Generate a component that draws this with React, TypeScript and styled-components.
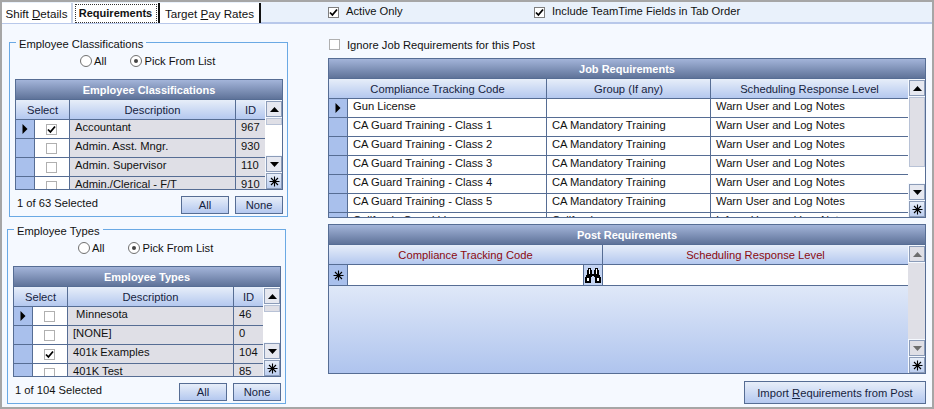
import React from "react";
import styled, { createGlobalStyle } from "styled-components";

const Global = createGlobalStyle`
  html, body { margin: 0; padding: 0; background: #a6a6a6; }
  * { box-sizing: border-box; }
  body { font-family: "Liberation Sans", Arial, sans-serif; font-size: 11.2px; color: #111; }
`;

const Line = "#566d94";

const Window = styled.div`
  width: 934px;
  height: 409px;
  border: 2px solid #a6a6a6;
  background: #f5f9ff;
  display: flex;
  flex-direction: column;
  overflow: hidden;
`;

const TopBar = styled.div`
  height: 22px;
  flex: none;
  display: flex;
  background: #e9f1fb;
  border-bottom: 2px solid #b8c8ea;
`;

const TabStrip = styled.div`
  width: 326px;
  flex: none;
  display: flex;
  align-items: flex-start;
  padding-top: 1px;
`;

const Tab = styled.div<{ $w: number; $active?: boolean; $edge?: "dark" | "light" }>`
  width: ${(p) => p.$w}px;
  height: 20px;
  flex: none;
  background: #fff;
  display: flex;
  align-items: center;
  justify-content: center;
  white-space: nowrap;
  font-size: ${(p) => (p.$active ? "11px" : "11.6px")};
  font-weight: ${(p) => (p.$active ? 700 : 400)};
  border-right: 2px solid ${(p) => (p.$edge === "dark" ? "#111" : "#c8d2e6")};
`;

const Focus = styled.span`
  border: 1px dotted #333;
  padding: 1px 2px;
  height: 19px;
  width: 82px;
  display: flex;
  align-items: center;
  justify-content: center;
`;

const TopChecks = styled.div`
  display: flex;
  align-items: center;
`;

const CheckLabel = styled.label<{ $w?: number; $gap?: number }>`
  display: flex;
  align-items: center;
  gap: ${(p) => p.$gap ?? 7}px;
  width: ${(p) => (p.$w ? `${p.$w}px` : "auto")};
  white-space: nowrap;
`;

const LabelText = styled.span<{ $up?: boolean; $down?: boolean }>`
  padding-bottom: ${(p) => (p.$up ? 2 : 0)}px;
  padding-top: ${(p) => (p.$down ? 2 : 0)}px;
`;

const Box = styled.span<{ $dark?: boolean }>`
  width: 11px;
  height: 11px;
  flex: none;
  background: #fff;
  border: 1px solid ${(p) => (p.$dark ? "#7f7f7f" : "#b0b0b0")};
  display: flex;
  align-items: center;
  justify-content: center;
`;

const Main = styled.div`
  flex: 1;
  min-height: 0;
  display: flex;
`;

const LeftColumn = styled.div`
  width: 326px;
  flex: none;
  display: flex;
  flex-direction: column;
`;

const Group = styled.section<{ $x: number; $top: number }>`
  position: relative;
  width: 279px;
  height: 175px;
  margin-left: ${(p) => p.$x}px;
  margin-top: ${(p) => p.$top}px;
  border: 1px solid #6aa9e4;
  padding: 12px 3px 0 5px;
  display: flex;
  flex-direction: column;
`;

const Legend = styled.div`
  position: absolute;
  left: 6px;
  top: -6px;
  padding: 0 3px;
  background: #f5f9ff;
  line-height: 14px;
`;

const RadioRow = styled.div`
  height: 12px;
  display: flex;
  align-items: center;
  padding-left: 65px;
  gap: 24px;
  margin-bottom: 12px;
`;

const RadioLabel = styled.label`
  display: flex;
  align-items: center;
  gap: 2px;
  white-space: nowrap;
`;

const RadioDot = styled.span<{ $on?: boolean }>`
  width: 12px;
  height: 12px;
  border-radius: 50%;
  border: 1px solid #707070;
  background: #fff;
  display: flex;
  align-items: center;
  justify-content: center;
  &::after {
    content: "";
    width: 4px;
    height: 4px;
    border-radius: 50%;
    background: ${(p) => (p.$on ? "#444" : "transparent")};
  }
`;

const Frame = styled.div<{ $w: number; $h: number }>`
  width: ${(p) => p.$w}px;
  height: ${(p) => p.$h}px;
  flex: none;
  border: 1px solid ${Line};
  display: flex;
  flex-direction: column;
  background: #f5f9ff;
`;

const TitleBar = styled.div`
  height: 20px;
  flex: none;
  border-bottom: 1px solid ${Line};
  background: linear-gradient(#a3b4d9, #5f7399);
  color: #fff;
  font-weight: 700;
  font-size: 11px;
  display: flex;
  align-items: center;
  justify-content: center;
`;

const GridBody = styled.div`
  flex: 1;
  min-height: 0;
  display: flex;
`;

const TableArea = styled.div`
  flex: 1;
  min-width: 0;
  overflow: hidden;
  display: flex;
  flex-direction: column;
`;

const HeaderRow = styled.div<{ $cols: string }>`
  height: 20px;
  flex: none;
  display: grid;
  grid-template-columns: ${(p) => p.$cols};
  border-bottom: 1px solid ${Line};
  background: linear-gradient(#e7eef9, #b4c8ef);
`;

const HeaderCell = styled.div<{ $red?: boolean }>`
  display: flex;
  align-items: center;
  justify-content: center;
  border-right: 1px solid ${Line};
  color: ${(p) => (p.$red ? "#8b0a10" : "#16233f")};
  white-space: nowrap;
  &:last-child { border-right: 0; }
`;

const DataRow = styled.div<{ $cols: string; $h?: number }>`
  height: ${(p) => p.$h ?? 19}px;
  flex: none;
  display: grid;
  grid-template-columns: ${(p) => p.$cols};
  border-bottom: 1px solid ${Line};
`;

const RowHead = styled.div`
  background: #a9c0ec;
  border-right: 1px solid ${Line};
  display: flex;
  align-items: center;
  justify-content: center;
`;

const Cell = styled.div<{ $gray?: boolean }>`
  background: ${(p) => (p.$gray ? "#dfdfe6" : "#fff")};
  border-right: 1px solid ${Line};
  padding: 0 0 5px 5px;
  display: flex;
  align-items: center;
  white-space: pre;
  overflow: hidden;
  &:last-child { border-right: 0; }
`;

const CheckCell = styled.div`
  background: #fff;
  border-right: 1px solid ${Line};
  padding-right: 1px;
  display: flex;
  align-items: center;
  justify-content: center;
`;

const InputCell = styled.div`
  background: #fff;
  border-right: 1px solid ${Line};
  display: flex;
  justify-content: flex-end;
`;

const FindButton = styled.div`
  width: 19px;
  background: #c4d4f2;
  border-left: 1px solid ${Line};
  display: flex;
  align-items: center;
  justify-content: center;
`;

const Fill = styled.div`
  flex: 1;
  background: linear-gradient(#dfe8f8, #afc4ee);
`;

const Scroll = styled.div`
  width: 17px;
  flex: none;
  display: flex;
  flex-direction: column;
  padding: 1px 0 0 1px;
  gap: 1px;
`;

const ScrollBtn = styled.div<{ $h?: number; $star?: boolean; $off?: boolean }>`
  height: ${(p) => p.$h ?? 16}px;
  flex: none;
  border: 1px solid #8c9cb8;
  background: ${(p) => (p.$star ? "linear-gradient(#e7eef9, #bccef0)" : p.$off ? "#dfdfe6" : "#e6e8f0")};
  display: flex;
  align-items: center;
  justify-content: center;
`;

const Track = styled.div<{ $off?: boolean }>`
  flex: 1;
  min-height: 0;
  margin-left: -1px;
  background: ${(p) => (p.$off ? "#dfdfe6" : "#fff")};
`;

const Thumb = styled.div<{ $h: number }>`
  height: ${(p) => p.$h}px;
  margin-left: 1px;
  background: #dfdfe6;
  border: 1px solid #b8c2d6;
`;

const StatusRow = styled.div`
  height: 18px;
  margin-top: 6px;
  width: 268px;
  display: flex;
  align-items: center;
  padding-left: 2px;
`;

const StatusText = styled.span`
  flex: 1;
  margin-top: -5px;
`;

const SmallBtn = styled.button`
  width: 48px;
  height: 18px;
  margin-left: 6px;
  padding: 0;
  font: inherit;
  color: #16233f;
  border: 1px solid ${Line};
  background: linear-gradient(#e7eef9, #b4c8ef);
`;

const RightColumn = styled.div`
  width: 598px;
  flex: none;
  display: flex;
  flex-direction: column;
`;

const IgnoreRow = styled.div`
  height: 34px;
  padding: 13px 0 0 1px;
  flex: none;
`;

const StackGap = styled.div`
  height: 6px;
  flex: none;
`;

const ImportRow = styled.div`
  display: flex;
  justify-content: flex-end;
  margin-top: 7px;
`;

const ImportBtn = styled.button`
  width: 182px;
  height: 23px;
  padding: 0;
  font: inherit;
  color: #16233f;
  border: 1px solid ${Line};
  background: linear-gradient(#e7eef9, #b4c8ef);
`;

const Tick = () => (
  <svg width="9" height="9" viewBox="0 0 9 9">
    <path d="M1 4.5 L3.4 7 L8 1.5" fill="none" stroke="#000" strokeWidth="1.8" />
  </svg>
);

const Star = () => (
  <svg width="11" height="11" viewBox="0 0 11 11">
    <path d="M5.5 0.5V10.5M0.5 5.5H10.5M2 2L9 9M9 2L2 9" stroke="#000" strokeWidth="1.1" fill="none" />
  </svg>
);

const Pointer = () => (
  <svg width="6" height="10" viewBox="0 0 6 10">
    <path d="M0.5 0 L5.5 5 L0.5 10Z" fill="#000" />
  </svg>
);

const Arrow = ({ down, off }: { down?: boolean; off?: boolean }) => (
  <svg width="9" height="5" viewBox="0 0 9 5">
    <path d={down ? "M0 0H9L4.5 5Z" : "M0 5H9L4.5 0Z"} fill={off ? "#6d6d6d" : "#000"} />
  </svg>
);

const Binoculars = () => (
  <svg width="16" height="15" viewBox="0 0 16 15" shapeRendering="crispEdges">
    <path
      d="M3 0h3v2h1v4h2V2h1V0h3v2h1v5h1v2h1v6h-6V9H9V8H7v1H6v6H0V9h1V7h1V2h1z"
      fill="#000"
    />
    <path d="M4 1h1v5H4zM11 1h1v5h-1zM2 10h2v3H2zM12 10h2v3h-2z" fill="#fff" />
  </svg>
);

const Check = ({ on, dark }: { on?: boolean; dark?: boolean }) => (
  <Box $dark={dark}>{on && <Tick />}</Box>
);

type Row = { check: boolean; desc: string; id: string };

const empCols = "19px 35px 166px 1fr";
const empHead = "54px 166px 1fr";

function ScrollBar({ thumb, off, topH = 16, starH = 16 }: { thumb: number; off?: boolean; topH?: number; starH?: number }) {
  return (
    <Scroll>
      <ScrollBtn $h={topH} $off={off}><Arrow off={off} /></ScrollBtn>
      <Track $off={off}>{thumb > 0 && <Thumb $h={thumb} />}</Track>
      <ScrollBtn $off={off}><Arrow down off={off} /></ScrollBtn>
      <ScrollBtn $h={starH} $star><Star /></ScrollBtn>
    </Scroll>
  );
}

function EmployeeGroup({ name, x, top, total, rows }: { name: string; x: number; top: number; total: string; rows: Row[] }) {
  return (
    <Group $x={x} $top={top}>
      <Legend>{name}</Legend>
      <RadioRow>
        <RadioLabel><RadioDot />All</RadioLabel>
        <RadioLabel><RadioDot $on />Pick From List</RadioLabel>
      </RadioRow>
      <Frame $w={268} $h={111}>
        <TitleBar>{name}</TitleBar>
        <GridBody>
          <TableArea>
            <HeaderRow $cols={empHead}>
              <HeaderCell>Select</HeaderCell>
              <HeaderCell>Description</HeaderCell>
              <HeaderCell>ID</HeaderCell>
            </HeaderRow>
            {rows.map((r, i) => (
              <DataRow key={r.desc} $cols={empCols}>
                <RowHead>{i === 0 && <Pointer />}</RowHead>
                <CheckCell><Check on={r.check} /></CheckCell>
                <Cell $gray>{r.desc}</Cell>
                <Cell $gray>{r.id}</Cell>
              </DataRow>
            ))}
          </TableArea>
          <ScrollBar thumb={7} />
        </GridBody>
      </Frame>
      <StatusRow>
        <StatusText>{total}</StatusText>
        <SmallBtn>All</SmallBtn>
        <SmallBtn>None</SmallBtn>
      </StatusRow>
    </Group>
  );
}

const classifications: Row[] = [
  { check: true, desc: "Accountant", id: "967" },
  { check: false, desc: "Admin. Asst. Mngr.", id: "930" },
  { check: false, desc: "Admin. Supervisor", id: "110" },
  { check: false, desc: "Admin./Clerical - F/T", id: "910" },
];

const types: Row[] = [
  { check: false, desc: " Minnesota", id: "46" },
  { check: false, desc: "[NONE]", id: "0" },
  { check: true, desc: "401k Examples", id: "104" },
  { check: false, desc: "401K Test", id: "85" },
];

const jobCols = "19px 199px 164px 1fr";
const jobHead = "218px 164px 1fr";
const warn = "Warn User and Log Notes";
const mand = "CA Mandatory Training";

const jobRows = [
  ["Gun License", "", warn],
  ["CA Guard Training - Class 1", mand, warn],
  ["CA Guard Training - Class 2", mand, warn],
  ["CA Guard Training - Class 3", mand, warn],
  ["CA Guard Training - Class 4", mand, warn],
  ["CA Guard Training - Class 5", mand, warn],
  ["California Guard License", "California", "Inform User and Log Notes"],
];

export default function App() {
  return (
    <>
      <Global />
      <Window>
        <TopBar>
          <TabStrip>
            <Tab $w={71}><span>Shift <u>D</u>etails</span></Tab>
            <Tab $w={87} $active $edge="dark"><Focus>Requirements</Focus></Tab>
            <Tab $w={101} $edge="dark"><span>Target <u>P</u>ay Rates</span></Tab>
          </TabStrip>
          <TopChecks>
            <CheckLabel $w={206}><Check on dark /><LabelText $up>Active Only</LabelText></CheckLabel>
            <CheckLabel><Check on dark /><LabelText $up>Include TeamTime Fields in Tab Order</LabelText></CheckLabel>
          </TopChecks>
        </TopBar>
        <Main>
          <LeftColumn>
            <EmployeeGroup name="Employee Classifications" x={7} top={18} total="1 of 63 Selected" rows={classifications} />
            <EmployeeGroup name="Employee Types" x={5} top={12} total="1 of 104 Selected" rows={types} />
          </LeftColumn>
          <RightColumn>
            <IgnoreRow>
              <CheckLabel><Check /><LabelText $down>Ignore Job Requirements for this Post</LabelText></CheckLabel>
            </IgnoreRow>
            <Frame $w={598} $h={160}>
              <TitleBar>Job Requirements</TitleBar>
              <GridBody>
                <TableArea>
                  <HeaderRow $cols={jobHead}>
                    <HeaderCell>Compliance Tracking Code</HeaderCell>
                    <HeaderCell>Group (If any)</HeaderCell>
                    <HeaderCell>Scheduling Response Level</HeaderCell>
                  </HeaderRow>
                  {jobRows.map((r, i) => (
                    <DataRow key={r[0]} $cols={jobCols}>
                      <RowHead>{i === 0 && <Pointer />}</RowHead>
                      <Cell>{r[0]}</Cell>
                      <Cell>{r[1]}</Cell>
                      <Cell>{r[2]}</Cell>
                    </DataRow>
                  ))}
                </TableArea>
                <ScrollBar thumb={70} />
              </GridBody>
            </Frame>
            <StackGap />
            <Frame $w={598} $h={150}>
              <TitleBar>Post Requirements</TitleBar>
              <GridBody>
                <TableArea>
                  <HeaderRow $cols="274px 1fr">
                    <HeaderCell $red>Compliance Tracking Code</HeaderCell>
                    <HeaderCell $red>Scheduling Response Level</HeaderCell>
                  </HeaderRow>
                  <DataRow $cols="19px 255px 1fr" $h={21}>
                    <RowHead><Star /></RowHead>
                    <InputCell><FindButton><Binoculars /></FindButton></InputCell>
                    <Cell />
                  </DataRow>
                  <Fill />
                </TableArea>
                <ScrollBar thumb={0} off />
              </GridBody>
            </Frame>
            <ImportRow>
              <ImportBtn>Import <u>R</u>equirements from Post</ImportBtn>
            </ImportRow>
          </RightColumn>
        </Main>
      </Window>
    </>
  );
}
